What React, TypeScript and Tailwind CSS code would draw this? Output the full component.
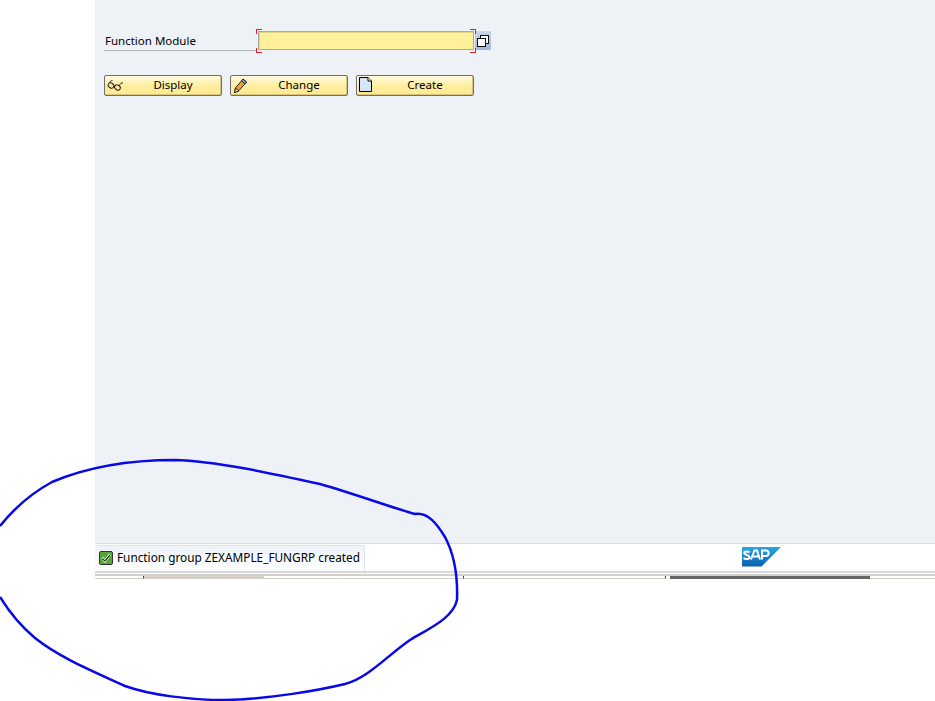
import React from 'react';

const font = { fontFamily: 'Tahoma, "Noto Sans", sans-serif' };

const GlassesIcon = () => (
  <svg width="17" height="15" viewBox="0 0 17 15" fill="none" stroke="#222" strokeWidth="1">
    <ellipse cx="4" cy="8.5" rx="3" ry="2.4" transform="rotate(35 4 8.5)" />
    <ellipse cx="10.5" cy="10.5" rx="3" ry="2.4" transform="rotate(35 10.5 10.5)" />
    <path d="M6.5 9.5l1.5-.5M3 6c0-1.500.8-2.500 2.500-2.500M12.500 8.500c.5-2 2-3 3.500-2.500" />
  </svg>
);

const PencilIcon = () => (
  <svg width="15" height="17" viewBox="0 0 15 17">
    <path d="M1.500 15.500l1-4.500L10 2l3.500 3-7.500 8.500z" fill="#f0a030" stroke="#222" strokeWidth="1" />
    <path d="M10 2l3.500 3-1.500 1.800-3.400-3z" fill="#8aa0c8" stroke="#222" strokeWidth="1" />
    <path d="M1.500 15.500l1-4.500 3.500 3z" fill="#f6e0b0" stroke="#222" strokeWidth="1" />
  </svg>
);

const PageIcon = () => (
  <svg width="13" height="15" viewBox="0 0 13 15" className="block">
    <path d="M.5.5h8.500l3.500 3.500v10.500H.5z" fill="#d4e6f8" stroke="#000" strokeWidth="1" />
    <path d="M9 .5v3.500h3.500" fill="#fff" stroke="#000" strokeWidth="1" />
  </svg>
);

const CopyIcon = () => (
  <svg width="12" height="12" viewBox="0 0 12 12" fill="#fff" stroke="#111" strokeWidth="1" className="block">
    <rect x="3.500" y="0.500" width="8" height="8" />
    <rect x="0.500" y="3.500" width="8" height="8" />
  </svg>
);

const CheckIcon = () => (
  <svg width="14" height="14" viewBox="0 0 14 14" className="block">
    <rect x="0.500" y="0.500" width="13" height="13" rx="1.500" fill="#58a838" stroke="#333" />
    <path d="M3 7l3 3 5-6.500" fill="none" stroke="#fff" strokeWidth="2.500" />
    <path d="M3 7.500l3 2.500 5-6" fill="none" stroke="#123a0c" strokeWidth="1.200" />
  </svg>
);

const SapLogo = () => (
  <svg width="40" height="20" viewBox="0 0 40 20" className="block">
    <defs>
      <linearGradient id="sapBlue" x1="0" y1="0" x2="0" y2="1">
        <stop offset="0" stopColor="#2aa6e6" />
        <stop offset="1" stopColor="#0a5fb0" />
      </linearGradient>
    </defs>
    <path d="M0 0h39L19.500 19.500H0z" fill="url(#sapBlue)" />
    <path d="M2 5.500c1-1.200 5-1.200 5.500 0M2 5.500c0 3 5.500 2 5.500 5 0 2-4.500 2-6 .6" fill="none" stroke="#fff" strokeWidth="2" />
    <path d="M9 12.500L12.500 3.500h2.500l3 9M11 9.500h5" fill="none" stroke="#fff" strokeWidth="2" />
    <path d="M20 12.500V3.500h4c3.500 0 3.500 5.500 0 5.500h-4" fill="none" stroke="#fff" strokeWidth="2" />
  </svg>
);

const ActionButton: React.FC<{ icon: React.ReactNode; label: string }> = ({ icon, label }) => (
  <button className="relative w-[118px] h-[21px] pl-[20px] pb-[2px] rounded-[2px] border border-[#6e6e6e] bg-gradient-to-b from-[#fffbe0] via-[#ffeea0] to-[#ffe98f] text-[11.500px] text-black flex items-center justify-center shadow-[inset_-1px_-1px_0_#d8c47a]">
    <span className="absolute left-[2px] top-[1px]">{icon}</span>
    <span>{label}</span>
  </button>
);

const Corner: React.FC<{ className: string }> = ({ className }) => (
  <span className={`absolute w-[6px] h-[5px] border-[#e8202a] ${className}`} />
);

export default function App() {
  return (
    <div className="relative w-[935px] h-[701px] overflow-hidden bg-white" style={font}>
      <div className="ml-[95px] flex flex-col">
        <main className="h-[543px] bg-[#eef1f6] pl-[9px] pt-[32px]">
          <div className="flex items-start h-[19px]">
            <div className="w-[152px] h-[19px] border-b border-[#b4b4bc] pl-px text-[11.500px] leading-[18px] text-black">
              Function Module
            </div>
            <div className="relative ml-[2px] mt-[-1px] w-[216px] h-[19px] border border-[#a8a8a8] bg-[#fff09c] shadow-[inset_1px_1px_0_#e0d488]">
              <Corner className="left-[-3px] top-[-3px] border-l border-t" />
              <Corner className="left-[-3px] bottom-[-4px] border-l border-b" />
              <Corner className="right-[-3px] top-[-3px] border-r border-t" />
              <Corner className="right-[-3px] bottom-[-4px] border-r border-b" />
            </div>
            <button className="ml-px w-[16px] h-[19px] mt-[-1px] rounded-[1px] bg-gradient-to-b from-[#ccd6e8] to-[#a4b4d2] flex items-center justify-center">
              <CopyIcon />
            </button>
          </div>
          <div className="flex gap-2 mt-[24px]">
            <ActionButton icon={<GlassesIcon />} label="Display" />
            <ActionButton icon={<PencilIcon />} label="Change" />
            <ActionButton icon={<PageIcon />} label="Create" />
          </div>
        </main>
        <footer className="h-[28px] border-t border-[#d8dce8] bg-white flex items-center relative">
          <div className="w-[270px] h-[26px] flex items-center gap-[4px] pl-[4px] bg-gradient-to-b from-[#eef3fa] to-white border-r border-t border-[#dde4ee] rounded-tr-[2px] text-[11.800px] text-black whitespace-nowrap">
            <CheckIcon />
            <span>Function group ZEXAMPLE_FUNGRP created</span>
          </div>
          <div className="absolute left-[647px] top-[3px]">
            <SapLogo />
          </div>
        </footer>
        <div className="h-[2px] bg-[#d4d8e0]" />
        <div className="h-px bg-white" />
        <div className="h-[2px] bg-[#d4d0c8]" />
        <div className="flex h-[3px]">
          <div className="w-[49px] border-b border-[#d4d0c8] border-r border-r-[#444444]" />
          <div className="w-[120px] bg-[#d4d0c8]" />
          <div className="w-[200px] border-b border-[#d4d0c8] border-r border-r-[#444444]" />
          <div className="w-[202px] border-b border-[#d4d0c8] border-r border-r-[#444444]" />
          <div className="w-[4px]" />
          <div className="w-[200px] bg-[#666666]" />
          <div className="flex-1 border-b border-[#d4d0c8]" />
        </div>
      </div>
      <svg className="absolute inset-0 pointer-events-none" width="935" height="701" viewBox="0 0 935 701" fill="none">
        <path
          d="M0 526C12 511 30 494 52 482C85 468 125 460 175 460C215 461 270 473 320 484C355 494 390 507 415 514C428 512 437 524 445 537C453 552 458 572 457 600C453 618 430 628 410 640C388 655 368 678 345 684C320 690 270 699 225 700C190 700 150 695 125 686C95 672 60 658 35 638C18 624 8 610 0 597"
          stroke="#0808e8"
          strokeWidth="2.500"
        />
      </svg>
    </div>
  );
}
